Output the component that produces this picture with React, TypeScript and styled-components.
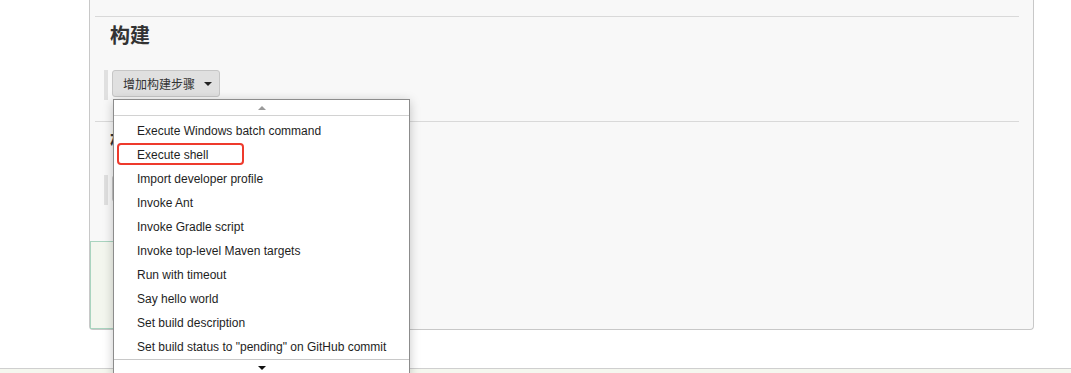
import React from "react";
import styled, { createGlobalStyle } from "styled-components";

const GlobalStyle = createGlobalStyle`
  html, body { margin: 0; padding: 0; background: #ffffff; }
  body {
    font-family: "Liberation Sans", Arial, "Noto Sans CJK SC", sans-serif;
    color: #333333;
    overflow: hidden;
  }
`;

const Page = styled.div`
  display: flex;
  flex-direction: column;
  width: 1071px;
  height: 373px;
  overflow: hidden;
`;

const Panel = styled.div`
  margin-left: 89px;
  width: 943px;
  background: #f8f8f8;
  border: 1px solid #c8c8c8;
  border-top: none;
  border-radius: 0 0 4px 4px;
  padding-top: 16px;
  display: flex;
  flex-direction: column;
`;

const Divider = styled.div`
  border-top: 1px solid #d9d9d9;
  margin: 0 14px 0 5px;
`;

const Section = styled.section`
  display: flex;
  flex-direction: column;
  padding-left: 14px;
  padding-bottom: 21px;
`;

const Heading = styled.h2`
  margin: 8px 0 0 6px;
  font-family: "Noto Sans CJK SC", "Liberation Sans", sans-serif;
  font-size: 20px;
  line-height: 20px;
  font-weight: 700;
  color: #333333;
`;

const StepRow = styled.div`
  display: flex;
  align-items: flex-start;
  margin-top: 25px;
`;

const Bar = styled.div`
  width: 4px;
  height: 30px;
  background: #e0e0e0;
  margin-right: 4px;
`;

const ButtonWrap = styled.div`
  position: relative;
`;

const AddButton = styled.button`
  display: flex;
  align-items: center;
  height: 27px;
  padding: 0 7px 0 10px;
  background: #e0e0e0;
  border: 1px solid #c6c6c6;
  border-radius: 3px;
  font-family: "Noto Sans CJK SC", "Liberation Sans", sans-serif;
  font-size: 12px;
  color: #333333;
  cursor: pointer;
`;

const Caret = styled.span<{ $color?: string; $size?: number }>`
  display: inline-block;
  width: 0;
  height: 0;
  border-left: ${(p) => p.$size ?? 4}px solid transparent;
  border-right: ${(p) => p.$size ?? 4}px solid transparent;
  border-top: 4px solid ${(p) => p.$color ?? "#222"};
`;

const ButtonCaret = styled(Caret)`
  margin-left: 9px;
  margin-top: 1px;
`;

const UpCaret = styled.span`
  display: inline-block;
  width: 0;
  height: 0;
  border-left: 4px solid transparent;
  border-right: 4px solid transparent;
  border-bottom: 4px solid #9a9a9a;
`;

const Dropdown = styled.div`
  position: absolute;
  top: 29px;
  left: 1px;
  width: 295px;
  background: #ffffff;
  border: 1px solid #8c8c8c;
  box-shadow: 0 2px 10px rgba(0, 0, 0, 0.22);
  z-index: 10;
`;

const ScrollArrow = styled.div<{ $bottom?: boolean }>`
  height: 15px;
  display: flex;
  align-items: center;
  justify-content: center;
  ${(p) =>
    p.$bottom
      ? "border-top: 1px solid #c8c8c8;"
      : "border-bottom: 1px solid #d2d2d2;"}
`;

const List = styled.ul`
  list-style: none;
  margin: 0;
  padding: 3px 0 0 0;
`;

const Item = styled.li<{ $highlighted?: boolean }>`
  position: relative;
  height: 24px;
  line-height: 24px;
  padding-left: 23px;
  font-size: 12px;
  color: #1e1e1e;
  white-space: nowrap;
  ${(p) =>
    p.$highlighted
      ? `
    &::after {
      content: "";
      position: absolute;
      left: 3px;
      top: 0;
      width: 123px;
      height: 18px;
      border: 2px solid #ee3a2c;
      border-radius: 4px;
    }
  `
      : ""}
`;

const ActionBar = styled.div`
  margin-top: 15px;
  width: 260px;
  height: 86px;
  background: #f3f6ee;
  border: 1px solid #a9d4bf;
`;

const Footer = styled.footer`
  margin-top: 38px;
  border-top: 1px solid #cfcfcf;
  background: #f5f7ef;
  height: 40px;
`;

const items = [
  "Execute Windows batch command",
  "Execute shell",
  "Import developer profile",
  "Invoke Ant",
  "Invoke Gradle script",
  "Invoke top-level Maven targets",
  "Run with timeout",
  "Say hello world",
  "Set build description",
  'Set build status to "pending" on GitHub commit',
];

export default function App() {
  return (
    <>
      <GlobalStyle />
      <Page>
        <Panel>
          <Divider />
          <Section>
            <Heading>构建</Heading>
            <StepRow>
              <Bar />
              <ButtonWrap>
                <AddButton>
                  增加构建步骤
                  <ButtonCaret />
                </AddButton>
                <Dropdown>
                  <ScrollArrow>
                    <UpCaret />
                  </ScrollArrow>
                  <List>
                    {items.map((t) => (
                      <Item key={t} $highlighted={t === "Execute shell"}>
                        {t}
                      </Item>
                    ))}
                  </List>
                  <ScrollArrow $bottom>
                    <Caret $color="#111" />
                  </ScrollArrow>
                </Dropdown>
              </ButtonWrap>
            </StepRow>
          </Section>
          <Divider />
          <Section>
            <Heading>构建后操作</Heading>
            <StepRow>
              <Bar />
              <ButtonWrap>
                <AddButton>
                  增加构建后操作步骤
                  <ButtonCaret />
                </AddButton>
              </ButtonWrap>
            </StepRow>
          </Section>
          <ActionBar />
        </Panel>
        <Footer />
      </Page>
    </>
  );
}
